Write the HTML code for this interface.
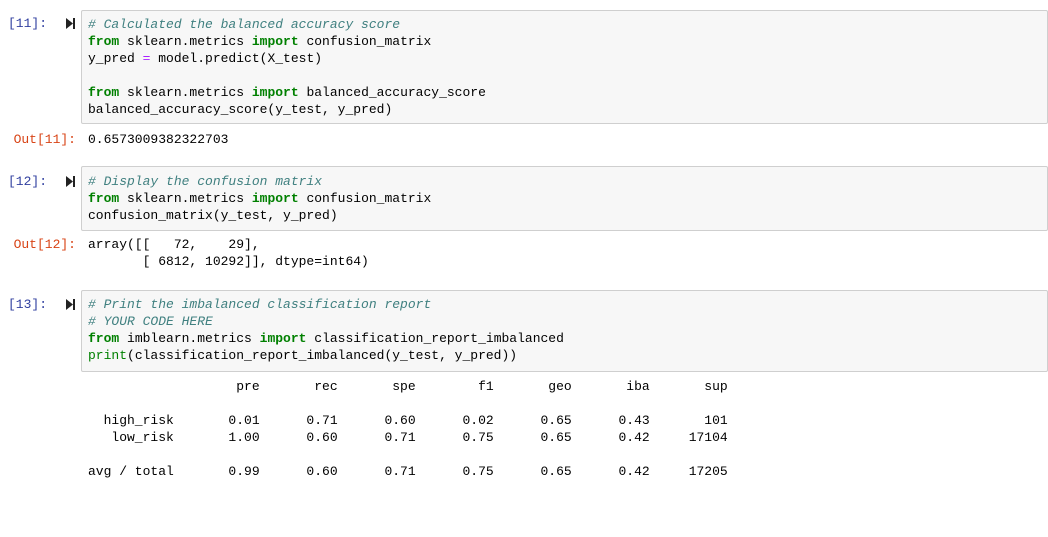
<!DOCTYPE html>
<html><head><meta charset="utf-8"><style>
body{margin:0;width:1048px;height:537px;background:#fff;position:relative;overflow:hidden;font-family:"Liberation Mono",monospace;font-size:13px;}
pre{margin:0;font-family:"Liberation Mono",monospace;font-size:13px;line-height:17px;position:absolute;color:#000;white-space:pre;}
.box{position:absolute;left:81px;width:965px;background:#f7f7f7;border:1px solid #cfcfcf;border-radius:2px;}
.p{position:absolute;color:#303F9F;text-align:right;width:47px;left:0;line-height:17px;}
.o{position:absolute;color:#D84315;text-align:right;width:76px;left:0;line-height:17px;}
.run{position:absolute;left:66px;width:9px;height:11px;}
.c{color:#408080;font-style:italic}
.k{color:#008000;font-weight:bold}
.b{color:#008000}
.e{color:#AA22FF}
</style></head><body>
<svg class="run" style="top:18px" viewBox="0 0 9 11"><path d="M0 0L7 5.5L0 11Z" fill="#222"/><rect x="7" y="0" width="2" height="11" fill="#222"/></svg>
<svg class="run" style="top:176px" viewBox="0 0 9 11"><path d="M0 0L7 5.5L0 11Z" fill="#222"/><rect x="7" y="0" width="2" height="11" fill="#222"/></svg>
<svg class="run" style="top:299px" viewBox="0 0 9 11"><path d="M0 0L7 5.5L0 11Z" fill="#222"/><rect x="7" y="0" width="2" height="11" fill="#222"/></svg>

<div class="p" style="top:15px">[11]:</div>
<div class="box" style="top:10px;height:112px"></div>
<pre style="left:88px;top:15.5px"><span class="c"># Calculated the balanced accuracy score</span>
<span class="k">from</span> sklearn.metrics <span class="k">import</span> confusion_matrix
y_pred <span class="e">=</span> model.predict(X_test)

<span class="k">from</span> sklearn.metrics <span class="k">import</span> balanced_accuracy_score
balanced_accuracy_score(y_test, y_pred)</pre>
<div class="o" style="top:130.5px">Out[11]:</div>
<pre style="left:88px;top:130.5px">0.6573009382322703</pre>

<div class="p" style="top:172.5px">[12]:</div>
<div class="box" style="top:166px;height:63px"></div>
<pre style="left:88px;top:172.5px"><span class="c"># Display the confusion matrix</span>
<span class="k">from</span> sklearn.metrics <span class="k">import</span> confusion_matrix
confusion_matrix(y_test, y_pred)</pre>
<div class="o" style="top:235.5px">Out[12]:</div>
<pre style="left:88px;top:235.5px">array([[   72,    29],
       [ 6812, 10292]], dtype=int64)</pre>

<div class="p" style="top:295.5px">[13]:</div>
<div class="box" style="top:290px;height:80px"></div>
<pre style="left:88px;top:295.5px"><span class="c"># Print the imbalanced classification report</span>
<span class="c"># YOUR CODE HERE</span>
<span class="k">from</span> imblearn.metrics <span class="k">import</span> classification_report_imbalanced
<span class="b">print</span>(classification_report_imbalanced(y_test, y_pred))</pre>
<pre style="left:88px;top:377.5px">                   pre       rec       spe        f1       geo       iba       sup

  high_risk       0.01      0.71      0.60      0.02      0.65      0.43       101
   low_risk       1.00      0.60      0.71      0.75      0.65      0.42     17104

avg / total       0.99      0.60      0.71      0.75      0.65      0.42     17205</pre>
</body></html>
